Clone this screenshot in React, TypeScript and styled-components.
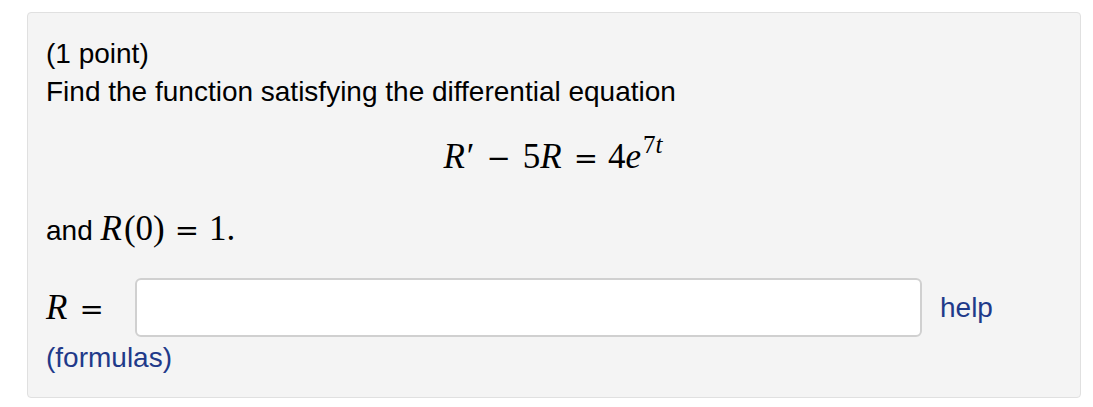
import { createGlobalStyle } from 'styled-components'
import styled from 'styled-components'

const GlobalStyle = createGlobalStyle`
  body {
    margin: 0;
    background: #fff;
    font-family: "Liberation Sans", Arial, sans-serif;
  }
`

const Page = styled.div`
  padding: 12px 12px 9px 27px;
`

const Panel = styled.div`
  box-sizing: border-box;
  width: 1054px;
  height: 386px;
  background: #f4f4f4;
  border: 1px solid #e0e0e0;
  border-radius: 4px;
  padding: 22px 18px 0 18px;
  color: #000;
  font-size: 28px;
`

const Line = styled.div<{ $mt?: number }>`
  line-height: 38px;
  height: 38px;
  margin-top: ${(p) => p.$mt ?? 0}px;
`

const Display = styled.div`
  text-align: center;
  margin-top: 24px;
  line-height: 44px;
  height: 44px;
`

const M = styled.span`
  font-family: "Liberation Serif", "Times New Roman", serif;
  font-size: 35px;
`

const I = styled.i`
  font-style: italic;
  padding-right: 2px;
`

const Op = styled.span<{ $w?: number }>`
  font-family: "DejaVu Sans", sans-serif;
  font-size: 29px;
  padding: 0 ${(p) => p.$w ?? 10}px;
`

const Sup = styled.sup`
  font-size: 0.72em;
  vertical-align: 0.6em;
  line-height: 0;
`

const AnswerRow = styled.div`
  display: flex;
  align-items: center;
  margin-top: 30px;
`

const Label = styled.div`
  width: 89px;
`

const Input = styled.input`
  box-sizing: border-box;
  flex: none;
  width: 787px;
  height: 59px;
  border: 2px solid #d0d0d0;
  border-radius: 6px;
  background: #fff;
  outline: none;
`

const Link = styled.a`
  color: #1f3a8a;
  text-decoration: none;
  cursor: pointer;
`

const HelpLink = styled(Link)`
  margin-left: 18px;
`

const Formulas = styled.div`
  margin-top: 2px;
  line-height: 38px;
`

export default function App() {
  return (
    <>
      <GlobalStyle />
      <Page>
        <Panel>
          <Line>(1 point)</Line>
          <Line>Find the function satisfying the differential equation</Line>
          <Display>
            <M>
              <I>R</I>′<Op $w={12}>−</Op>5<I>R</I>
              <Op>=</Op>4<I>e</I>
              <Sup>
                7<I>t</I>
              </Sup>
            </M>
          </Display>
          <Line $mt={31}>
            and{' '}
            <M>
              <I>R</I>(0)<Op>=</Op>1.
            </M>
          </Line>
          <AnswerRow>
            <Label>
              <M>
                <I>R</I>
                <Op>=</Op>
              </M>
            </Label>
            <Input type="text" />
            <HelpLink>help</HelpLink>
          </AnswerRow>
          <Formulas>
            <Link>(formulas)</Link>
          </Formulas>
        </Panel>
      </Page>
    </>
  )
}
